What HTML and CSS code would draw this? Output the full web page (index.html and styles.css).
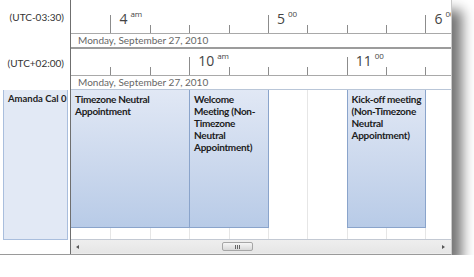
FILE: index.html
```html
<!DOCTYPE html>
<html lang="en">
<head>
    <meta charset="UTF-8">
    <title>Scheduler - Time Zones</title>
    <link rel="stylesheet" href="styles.css">
</head>
<body>
    <div class="window">
        <div class="scheduler">
            <!-- header row: UTC-03:30 -->
            <div class="side tz-label">(UTC-03:30)</div>
            <div class="ruler">
                <div class="slot"></div>
                <div class="slot major"><span class="tick"></span><span class="hour">4<sup>am</sup></span></div>
                <div class="slot"><span class="tick"></span></div>
                <div class="slot"><span class="tick"></span></div>
                <div class="slot"><span class="tick"></span></div>
                <div class="slot major"><span class="tick"></span><span class="hour">5<sup>00</sup></span></div>
                <div class="slot"><span class="tick"></span></div>
                <div class="slot"><span class="tick"></span></div>
                <div class="slot"><span class="tick"></span></div>
                <div class="slot major"><span class="tick"></span><span class="hour">6<sup>00</sup></span></div>
            </div>
            <div class="side"></div>
            <div class="date-row date-first">Monday, September 27, 2010</div>

            <!-- header row: UTC+02:00 -->
            <div class="side tz-label">(UTC+02:00)</div>
            <div class="ruler">
                <div class="slot"></div>
                <div class="slot"><span class="tick"></span></div>
                <div class="slot"><span class="tick"></span></div>
                <div class="slot major"><span class="tick"></span><span class="hour">10<sup>am</sup></span></div>
                <div class="slot"><span class="tick"></span></div>
                <div class="slot"><span class="tick"></span></div>
                <div class="slot"><span class="tick"></span></div>
                <div class="slot major"><span class="tick"></span><span class="hour">11<sup>00</sup></span></div>
                <div class="slot"><span class="tick"></span></div>
                <div class="slot"><span class="tick"></span></div>
            </div>
            <div class="side"></div>
            <div class="date-row date-last">Monday, September 27, 2010</div>

            <!-- resource row -->
            <div class="side resource-side">
                <div class="resource-cell">Amanda Cal 0</div>
            </div>
            <div class="area">
                <div class="cells">
                    <div class="cell"></div>
                    <div class="cell"></div>
                    <div class="cell"></div>
                    <div class="cell"></div>
                    <div class="cell"></div>
                    <div class="cell"></div>
                    <div class="cell"></div>
                    <div class="cell"></div>
                    <div class="cell"></div>
                    <div class="cell"></div>
                </div>
                <div class="appt appt-first" style="left: 0px; width: 119.1px;">Timezone Neutral Appointment</div>
                <div class="appt" style="left: 118.1px; width: 79.75px;">Welcome Meeting (Non-Timezone Neutral Appointment)</div>
                <div class="appt" style="left: 275.6px; width: 79.75px;">Kick-off meeting (Non-Timezone Neutral Appointment)</div>
            </div>

            <!-- scrollbar row -->
            <div class="side"></div>
            <div class="hscroll">
                <span class="arrow arrow-left"></span>
                <div class="track">
                    <div class="thumb"><span class="grip"></span></div>
                </div>
                <span class="arrow arrow-right"></span>
            </div>
        </div>
    </div>
</body>
</html>
```

FILE: styles.css
```css
body {
    margin: 0;
    background: #ffffff;
    font-family: 'Lato', 'Open Sans', sans-serif;
    color: #222;
}

.window {
    width: 452px;
    height: 255px;
    box-sizing: border-box;
    background: #fff;
    border-right: 1px solid #c9c9c9;
    border-bottom: 1px solid #9a9a9a;
    box-shadow: 10px 10px 12px rgba(0, 0, 0, 0.55);
    overflow: hidden;
}

.scheduler {
    display: grid;
    grid-template-columns: 71px 380px;
    grid-template-rows: 34px 15px 27px 14px 150px 14px;
}

.side {
    box-sizing: border-box;
    border-right: 1px solid #6f6f6f;
}

.tz-label {
    display: flex;
    align-items: center;
    justify-content: flex-end;
    padding-right: 6px;
    font-size: 10px;
    color: #333;
}

/* time ruler */
.ruler {
    display: flex;
    overflow: hidden;
    border-bottom: 1px solid #a9a9a9;
}

.slot {
    flex: none;
    width: 39.375px;
    display: flex;
    align-items: flex-end;
}

.tick {
    width: 0;
    height: 8px;
    border-left: 1px solid #8c8c8c;
}

.major .tick {
    height: 18px;
}

.hour {
    margin: 0 0 7px 8px;
    font-family: 'Open Sans', sans-serif;
    font-size: 14px;
    line-height: 1;
    color: #444;
    white-space: nowrap;
}

.hour sup {
    font-size: 8px;
    vertical-align: top;
    margin-left: 3px;
    position: relative;
    top: -2px;
}

.date-row {
    box-sizing: border-box;
    padding-left: 7px;
    font-size: 10px;
    line-height: 13px;
    color: #666;
    white-space: nowrap;
}

.date-first {
    border-bottom: 2px solid #9c9c9c;
}

.date-last {
    border-bottom: 1px solid #b9c6d8;
}

/* resource row */
.resource-side {
    padding: 0 2px 0 3px;
    border-bottom: 0;
}

.resource-cell {
    height: 150px;
    box-sizing: border-box;
    padding: 3px 0 0 4px;
    background: #e2e9f5;
    border: 1px solid #a9bedd;
    border-top: 0;
    font-size: 9.5px;
    font-weight: bold;
    color: #1e1e1e;
    white-space: nowrap;
}

.area {
    position: relative;
    overflow: hidden;
    border-bottom: 1px solid #c3c9d3;
}

.cells {
    display: flex;
    height: 100%;
}

.cell {
    flex: none;
    width: 39.375px;
    box-sizing: border-box;
    border-left: 1px solid #e6e6e6;
}

.cell:first-child {
    border-left: 0;
}

.appt {
    position: absolute;
    top: 0;
    height: 138px;
    box-sizing: border-box;
    padding: 3px 0 0 4px;
    background: linear-gradient(to bottom, #e1e8f5 0%, #cbd8ed 55%, #b8cbe7 100%);
    border: 1px solid #8aa4cb;
    border-top: 0;
    font-size: 10px;
    font-weight: bold;
    letter-spacing: -0.3px;
    line-height: 12px;
    color: #1c1c1c;
}

.appt-first {
    border-left: 0;
}

/* horizontal scrollbar */
.hscroll {
    display: flex;
    align-items: center;
    background: linear-gradient(to bottom, #eeeeee, #e6e6e6);
    border-bottom: 1px solid #ececec;
}

.arrow {
    flex: none;
    width: 0;
    height: 0;
    border-top: 2px solid transparent;
    border-bottom: 2px solid transparent;
}

.arrow-left {
    margin: 0 4px 0 5px;
    border-right: 3px solid #555;
}

.arrow-right {
    margin: 0 6px 0 4px;
    border-left: 3px solid #555;
}

.track {
    flex: 1;
    height: 100%;
    display: flex;
    align-items: center;
}

.thumb {
    margin-left: 139px;
    width: 31px;
    height: 9px;
    box-sizing: border-box;
    border: 1px solid #a6a6a6;
    border-radius: 2px;
    background: linear-gradient(to bottom, #f6f6f6, #d8d8d8);
    display: flex;
    align-items: center;
    justify-content: center;
}

.grip {
    width: 5px;
    height: 4px;
    background: repeating-linear-gradient(to right, #666 0 1px, transparent 1px 2px);
}
```
